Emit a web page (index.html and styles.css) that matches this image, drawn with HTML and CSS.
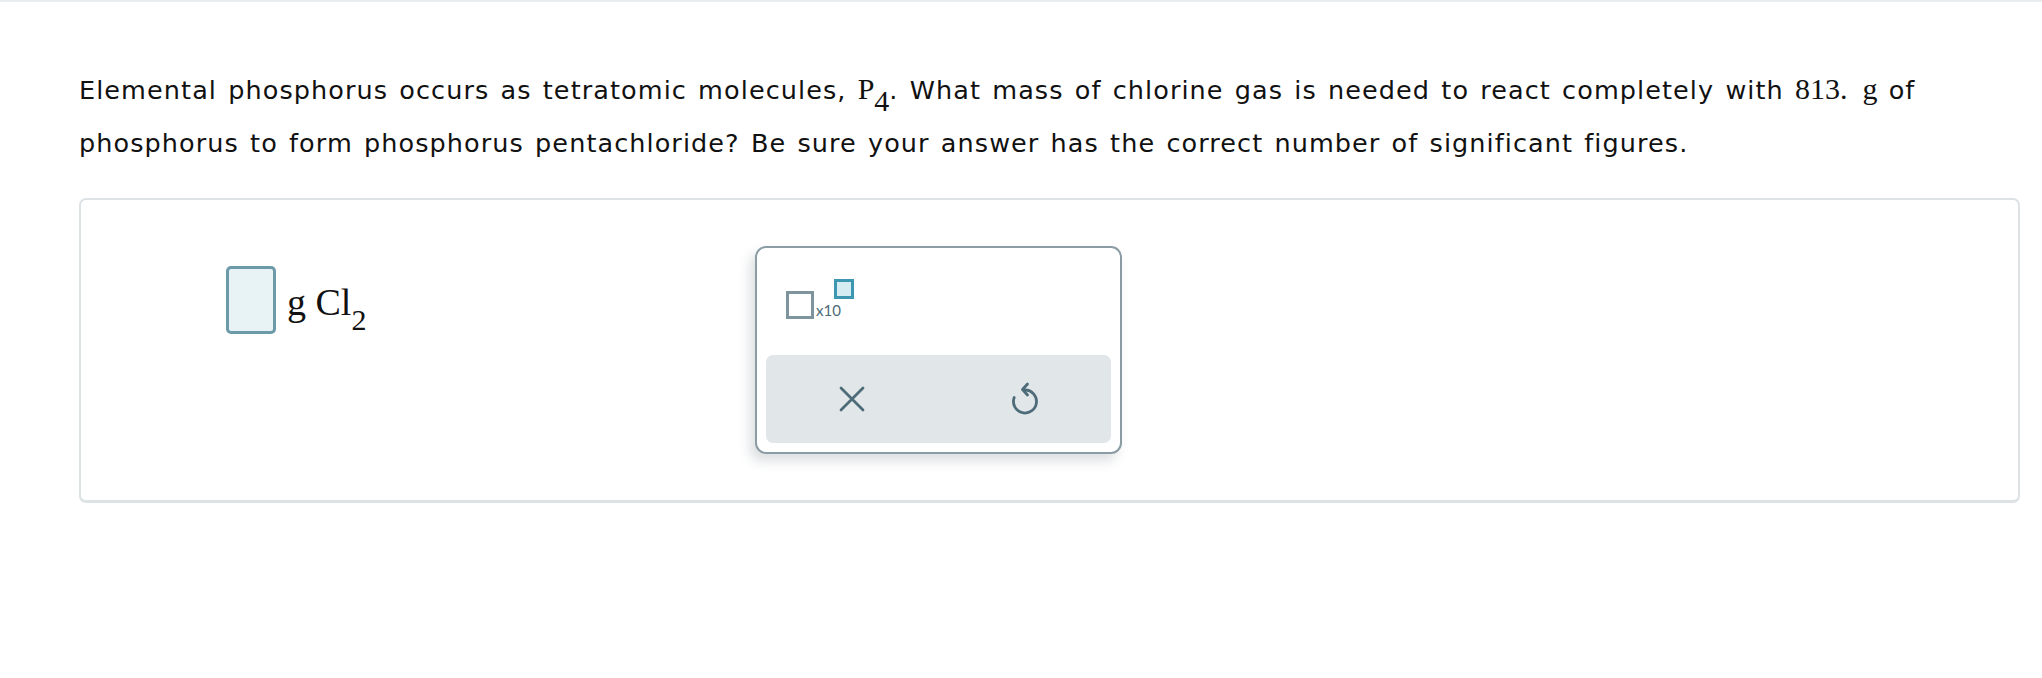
FILE: index.html
```html
<!DOCTYPE html>
<html lang="en">
<head>
<meta charset="utf-8">
<title>Phosphorus pentachloride</title>
<link rel="stylesheet" href="styles.css">
</head>
<body>
<div class="topline"></div>
<main class="page">
  <p class="question">Elemental phosphorus occurs as tetratomic molecules, <span class="math">P<sub class="sub">4</sub></span>. What mass of chlorine gas is needed to react completely with <span class="math">813.&nbsp; g</span> of phosphorus to form phosphorus pentachloride? Be sure your answer has the correct number of significant figures.</p>
  <section class="panel">
    <div class="answer">
      <span class="input"></span>
      <span class="unit">g Cl<sub class="unit-sub">2</sub></span>
    </div>
    <div class="palette">
      <div class="palette-top">
        <div class="sci">
          <span class="sci-base"></span>
          <span class="sci-text">x10</span>
          <span class="sci-exp"></span>
        </div>
      </div>
      <div class="palette-bar">
        <button class="pbtn" type="button" aria-label="Clear">
          <svg width="26" height="26" viewBox="0 0 26 26"><path d="M2 2 L24 24 M24 2 L2 24" fill="none" stroke="#4d6b78" stroke-width="2.8" stroke-linecap="round"/></svg>
        </button>
        <button class="pbtn" type="button" aria-label="Undo">
          <svg width="30" height="34" viewBox="0 0 30 34"><path d="M15 8 A11.5 11.5 0 1 1 4.2 15.5" fill="none" stroke="#4d6b78" stroke-width="2.8" stroke-linecap="round"/><path d="M17.5 2 L12.5 7.5 L17.5 13" fill="none" stroke="#4d6b78" stroke-width="2.8" stroke-linecap="round" stroke-linejoin="round"/></svg>
        </button>
      </div>
    </div>
  </section>
</main>
</body>
</html>
```

FILE: styles.css
```css
html, body {
  margin: 0;
  padding: 0;
  background: #ffffff;
}

.topline {
  height: 2px;
  background: #e9ecee;
}

.page {
  padding: 0 22px 0 79px;
}

.question {
  margin: 60px 0 0 0;
  font-family: "DejaVu Sans", Verdana, sans-serif;
  font-size: 25.5px;
  letter-spacing: 1.08px;
  word-spacing: 2px;
  line-height: 53px;
  color: #111111;
}

.math {
  font-family: "Liberation Serif", "Times New Roman", serif;
  font-size: 30px;
  letter-spacing: 0;
  word-spacing: 0;
}

.sub {
  font-size: 30px;
  vertical-align: -12px;
  line-height: 0;
}

.panel {
  position: relative;
  box-sizing: border-box;
  margin-top: 28px;
  height: 305px;
  border: 2px solid #dde2e5;
  border-bottom-width: 3px;
  border-radius: 7px;
  background: #ffffff;
}

.answer {
  display: flex;
  align-items: flex-start;
  padding: 66px 0 0 145px;
}

.input {
  box-sizing: border-box;
  width: 50px;
  height: 68px;
  border: 3px solid #6d9aa9;
  border-radius: 5px;
  background: #e8f3f5;
}

.unit {
  margin-left: 11px;
  padding-top: 2px;
  font-family: "Liberation Serif", "Times New Roman", serif;
  font-size: 38px;
  line-height: 68px;
  color: #111111;
}

.unit-sub {
  font-size: 30px;
  vertical-align: -15px;
  line-height: 0;
}

.palette {
  position: absolute;
  left: 674px;
  top: 46px;
  box-sizing: border-box;
  width: 367px;
  height: 208px;
  padding: 9px;
  border: 2px solid #8b9ca5;
  border-radius: 11px;
  background: #ffffff;
  box-shadow: -5px 7px 12px rgba(60, 80, 90, 0.18);
  display: flex;
  flex-direction: column;
}

.palette-top {
  height: 98px;
  box-sizing: border-box;
  padding: 34px 0 0 20px;
}

.sci {
  display: flex;
  align-items: flex-end;
}

.sci-base {
  box-sizing: border-box;
  width: 28px;
  height: 28px;
  border: 3px solid #7f959e;
  background: #ffffff;
}

.sci-text {
  margin-left: 2px;
  margin-bottom: 1px;
  font-family: Lato, "Open Sans", sans-serif;
  font-size: 15px;
  line-height: 15px;
  color: #4d6a77;
}

.sci-exp {
  box-sizing: border-box;
  align-self: flex-start;
  width: 20px;
  height: 20px;
  margin-left: -7px;
  margin-top: -12px;
  border: 3px solid #3d97b1;
  background: #d5ecf2;
}

.palette-bar {
  flex: 1;
  display: flex;
  background: #e1e6e9;
  border-radius: 7px;
}

.pbtn {
  flex: 1;
  display: flex;
  align-items: center;
  justify-content: center;
  border: 0;
  background: transparent;
  padding: 0;
}
```
